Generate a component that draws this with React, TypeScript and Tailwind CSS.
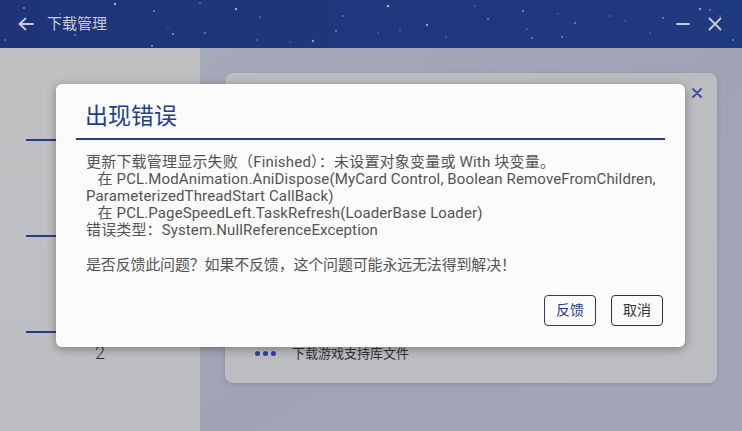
const stars: [number, number, number, number][] = [
  [24, 8, 1, 0.5], [60, 14, 0.8, 0.4], [115, 4, 1.2, 0.6], [154, 11, 1, 0.4], [168, 27, 0.8, 0.3],
  [200, 3, 0.8, 0.5], [236, 9, 1.2, 0.6], [173, 34, 1, 0.5], [205, 33, 1, 0.4], [152, 46, 1, 0.5],
  [257, 40, 0.8, 0.4], [290, 42, 0.8, 0.3], [313, 41, 1.2, 0.5], [343, 16, 0.8, 0.5], [336, 31, 1, 0.4],
  [388, 6, 1.3, 0.6], [400, 30, 0.8, 0.4], [427, 25, 1.2, 0.5], [446, 37, 0.8, 0.4], [475, 6, 0.8, 0.4],
  [523, 11, 1, 0.5], [527, 29, 0.8, 0.4], [532, 38, 1, 0.4], [558, 14, 0.8, 0.3], [562, 37, 1, 0.4],
  [575, 23, 1, 0.4], [610, 16, 0.8, 0.4], [625, 21, 0.8, 0.3], [663, 18, 1, 0.4], [700, 9, 1.2, 0.5],
  [710, 10, 1, 0.4], [720, 16, 0.8, 0.4], [733, 40, 1, 0.4], [75, 35, 1, 0.4], [5, 40, 1, 0.3],
  [92, 27, 0.8, 0.4], [260, 17, 0.8, 0.4], [378, 33, 0.8, 0.3], [488, 19, 1, 0.4], [650, 33, 0.8, 0.3],
];

function TitleBar() {
  return (
    <header className="relative flex h-12 shrink-0 items-center bg-gradient-to-r from-[#1f3478] to-[#203a80] pl-[18px] pr-[20px] text-[#c9cddb]">
      <svg className="absolute inset-0 h-full w-full" viewBox="0 0 742 48">
        {stars.map(([x, y, r, o], i) => (
          <circle key={i} cx={x} cy={y} r={r} fill="#ffffff" opacity={o} />
        ))}
      </svg>
      {/* back arrow */}
      <svg className="relative h-[14px] w-[16px]" viewBox="0 0 16 14" fill="none" stroke="currentColor" strokeWidth={1.8} strokeLinecap="round" strokeLinejoin="round">
        <path d="M1.5 7H15M7.5 1.5L1.5 7l6 5.5" />
      </svg>
      <span className="relative ml-[13px] text-[15px]">下载管理</span>
      <div className="grow" />
      <svg className="relative h-[14px] w-[14px]" viewBox="0 0 14 14" stroke="currentColor" strokeWidth={1.8} strokeLinecap="round">
        <path d="M1 7h12" />
      </svg>
      <svg className="relative ml-[18px] h-[14px] w-[14px]" viewBox="0 0 14 14" stroke="currentColor" strokeWidth={1.8} strokeLinecap="round">
        <path d="M1.5 1.5l11 11M12.5 1.5l-11 11" />
      </svg>
    </header>
  );
}

function SideItem({ label }: { label?: string }) {
  return (
    <div className="h-[96px]">
      <div className="ml-[26px] h-[2px] w-[150px] bg-[#233c86]" />
      {label && <div className="mt-[8px] pl-[95px] text-[18px] font-light leading-[24px] text-[#2f2f33]">{label}</div>}
    </div>
  );
}

function ErrorDialog() {
  return (
    <div className="absolute left-[56px] top-[36px] flex h-[263px] w-[629px] flex-col rounded-[6px] bg-[#fbfbfb] shadow-[0_2px_10px_rgba(0,0,0,0.35)]">
      <div className="px-[29px] pt-[17px] text-[23px] leading-[32px] text-[#233e8a]">出现错误</div>
      <div className="mx-[20px] mt-[5px] h-[2px] bg-[#233c86]" />
      <div className="mt-[14px] whitespace-nowrap px-[30px] text-[15px] leading-[17px] tracking-[0.13px] text-[#545454]">
        <div className="tracking-[0.2px]">更新下载管理显示失败（Finished）：未设置对象变量或 With 块变量。</div>
        <div>&nbsp;&nbsp;&nbsp;在 PCL.ModAnimation.AniDispose(MyCard Control, Boolean RemoveFromChildren,</div>
        <div>ParameterizedThreadStart CallBack)</div>
        <div>&nbsp;&nbsp;&nbsp;在 PCL.PageSpeedLeft.TaskRefresh(LoaderBase Loader)</div>
        <div>错误类型：System.NullReferenceException</div>
        <div className="mt-[18px] tracking-[-0.18px]">是否反馈此问题？如果不反馈，这个问题可能永远无法得到解决！</div>
      </div>
      <div className="mt-auto flex justify-end gap-[15px] pb-[21px] pr-[22px]">
        <button className="h-[31px] w-[52px] rounded-[4px] border border-[#233c86] text-[14px] text-[#233c86]">反馈</button>
        <button className="h-[31px] w-[52px] rounded-[4px] border border-[#34343a] text-[14px] text-[#34343a]">取消</button>
      </div>
    </div>
  );
}

export default function App() {
  return (
    <div
      className="flex h-[431px] w-[742px] flex-col overflow-hidden bg-[#1f3478]"
      style={{ fontFamily: 'Roboto, "Noto Sans CJK SC", sans-serif' }}
    >
      <TitleBar />
      <div className="relative flex grow">
        <aside className="w-[200px] shrink-0 bg-gradient-to-b from-[#c0c0c3] to-[#bdbec1] pt-[91px]">
          <SideItem />
          <SideItem />
          <SideItem label="2" />
        </aside>
        <main className="flex grow flex-col bg-gradient-to-br from-[#a6a9b8] via-[#a0a3b6] to-[#a2a6b6] px-[25px] pb-[48px] pt-[25px]">
          <div className="relative flex grow flex-col rounded-[8px] bg-[#bcbdc0] shadow-[0_1px_4px_rgba(0,0,0,0.15)]">
            <div className="flex justify-end pr-[15px] pt-[15px]">
              <svg className="h-[10px] w-[10px] text-[#3a4f9e]" viewBox="0 0 10 10" stroke="currentColor" strokeWidth={1.8} strokeLinecap="round">
                <path d="M1 1l8 8M9 1L1 9" />
              </svg>
            </div>
            <div className="mt-auto flex items-center pb-[20px] pl-[30px]">
              <div className="flex gap-[3px]">
                <span className="h-[5px] w-[5px] rounded-full bg-[#2b43a0]" />
                <span className="h-[5px] w-[5px] rounded-full bg-[#2b43a0]" />
                <span className="h-[5px] w-[5px] rounded-full bg-[#2b43a0]" />
              </div>
              <span className="ml-[16px] text-[13px] text-[#333338]">下载游戏支持库文件</span>
            </div>
          </div>
        </main>
        <ErrorDialog />
      </div>
    </div>
  );
}
